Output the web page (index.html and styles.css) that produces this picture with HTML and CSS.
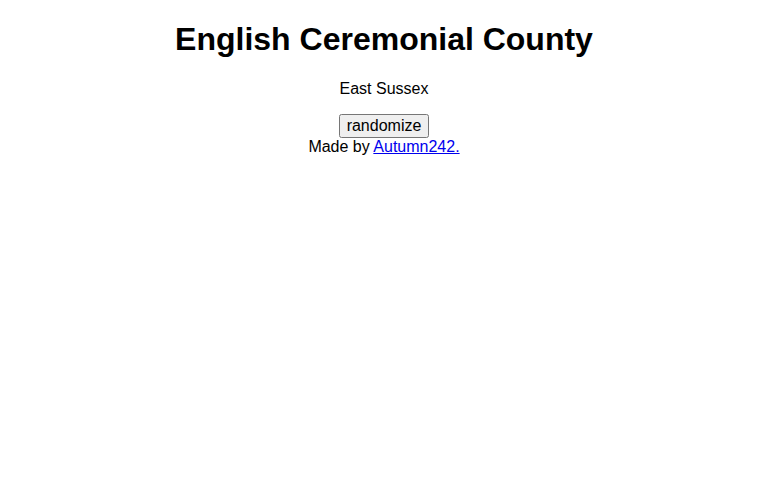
FILE: index.html
```html
<!DOCTYPE html>
<html lang="en">
<head>
  <meta charset="UTF-8" />
  <meta name="viewport" content="width=device-width, initial-scale=1.0" />
  <title>English Ceremonial County</title>
  <link rel="stylesheet" href="styles.css">
</head>
<body>
  <h1>English Ceremonial County</h1>
  <p id="county">East Sussex</p>
  <button class="randomize" id="randomize">randomize</button>
  <div class="credit">Made by <a href="#">Autumn242.</a></div>

  <script>
    const counties = ['Bedfordshire', 'Berkshire', 'Bristol', 'Buckinghamshire', 'Cambridgeshire',
      'Cheshire', 'Cornwall', 'Cumbria', 'Derbyshire', 'Devon', 'Dorset', 'Durham',
      'East Riding of Yorkshire', 'East Sussex', 'Essex', 'Gloucestershire', 'Greater London',
      'Greater Manchester', 'Hampshire', 'Herefordshire', 'Hertfordshire', 'Isle of Wight',
      'Kent', 'Lancashire', 'Leicestershire', 'Lincolnshire', 'Merseyside', 'Norfolk',
      'North Yorkshire', 'Northamptonshire', 'Northumberland', 'Nottinghamshire', 'Oxfordshire',
      'Rutland', 'Shropshire', 'Somerset', 'South Yorkshire', 'Staffordshire', 'Suffolk',
      'Surrey', 'Tyne and Wear', 'Warwickshire', 'West Midlands', 'West Sussex',
      'West Yorkshire', 'Wiltshire', 'Worcestershire', 'City of London'];

    document.getElementById('randomize').addEventListener('click', () => {
      const pick = counties[Math.floor(Math.random() * counties.length)];
      document.getElementById('county').textContent = pick;
    });
  </script>
</body>
</html>
```

FILE: styles.css
```css
body {
  margin: 0 8px;
  font-family: 'Liberation Sans', Arial, sans-serif;
  text-align: center;
}

h1 {
  margin: 21px 0 22px;
}

.randomize {
  font-family: 'Liberation Sans', Arial, sans-serif;
  font-size: 16px;
}
```
